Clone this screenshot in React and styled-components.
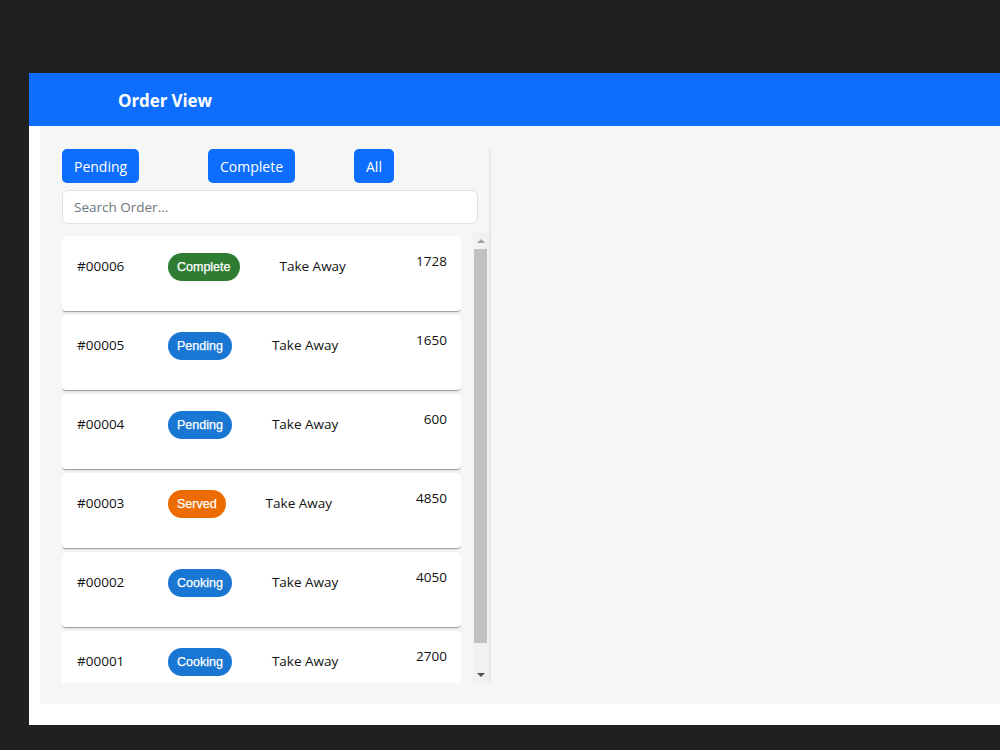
import React from "react";
import styled, { createGlobalStyle } from "styled-components";

const Global = createGlobalStyle`
  html, body { margin: 0; padding: 0; height: 100%; }
  body {
    background: #202020;
    font-family: "Segoe UI", "Open Sans", "Noto Sans", sans-serif;
    overflow: hidden;
  }
  * { box-sizing: border-box; }
`;

const Screen = styled.div`
  padding: 73px 0 0 29px;
  height: 750px;
`;

const Window = styled.div`
  width: 1000px;
  background: #ffffff;
  padding-bottom: 21px;
`;

const Header = styled.header`
  height: 53px;
  background: #0d6efd;
  display: flex;
  align-items: center;
  padding-left: 89px;
`;

const Title = styled.h1`
  margin: 0;
  color: #ffffff;
  font-size: 17px;
  font-weight: 700;
  font-family: "Open Sans", "Noto Sans", sans-serif;
  letter-spacing: -0.1px;
  padding-top: 2px;
`;

const Body = styled.main`
  margin-left: 11px;
  background: #f6f6f6;
  padding: 23px 0 21px 22px;
  display: flex;
`;

const Column = styled.section`
  width: 429px;
  height: 534px;
  border-right: 2px solid #e6e8ec;
  display: flex;
  flex-direction: column;
`;

const FilterRow = styled.div`
  display: grid;
  grid-template-columns: 146px 146px 146px;
  justify-items: start;
`;

const FilterButton = styled.button`
  height: 34px;
  padding: 0 12px;
  border: none;
  border-radius: 5px;
  background: #0d6efd;
  color: #ffffff;
  font-family: "Open Sans", "Noto Sans", sans-serif;
  font-size: 14px;
  cursor: pointer;
`;

const Search = styled.input`
  margin-top: 7px;
  width: 416px;
  height: 34px;
  border: 1px solid #dee2e6;
  border-radius: 6px;
  background: #ffffff;
  padding: 0 11px;
  font-family: "Open Sans", "Noto Sans", sans-serif;
  font-size: 13.5px;
  color: #212529;
  outline: none;
  &::placeholder { color: #6c757d; }
`;

const ListArea = styled.div`
  margin-top: 9px;
  flex: 1;
  min-height: 0;
  display: flex;
  gap: 12px;
`;

const List = styled.div`
  width: 399px;
  overflow: hidden;
  padding: 3px 0;
  display: flex;
  flex-direction: column;
  gap: 4px;
`;

const ScrollTrack = styled.div`
  width: 16px;
  background: #f1f1f1;
  display: flex;
  flex-direction: column;
  align-items: center;
`;

const ScrollArrow = styled.div`
  height: 16px;
  width: 16px;
  display: flex;
  align-items: center;
  justify-content: center;
  margin-top: ${(p) => (p.$end ? "auto" : "0")};
`;

const ScrollThumb = styled.div`
  width: 13px;
  margin-right: 1px;
  height: 394px;
  background: #c1c1c1;
`;

const Card = styled.div`
  flex: 0 0 75px;
  background: #ffffff;
  border-radius: 4px;
  box-shadow: 0 2px 1px -1px rgba(0, 0, 0, 0.2), 0 1px 1px 0 rgba(0, 0, 0, 0.14),
    0 1px 3px 0 rgba(0, 0, 0, 0.12);
  padding: 16px 14px 0 15px;
  display: flex;
  align-items: flex-start;
`;

const OrderId = styled.span`
  width: 91px;
  line-height: 28px;
  font-size: 13.5px;
  color: #111;
`;

const chipColors = {
  Complete: "#2e7d32",
  Pending: "#1976d2",
  Served: "#ed6c02",
  Cooking: "#1976d2",
};

const Chip = styled.span`
  margin-top: 1px;
  height: 28px;
  padding: 0 9px;
  border-radius: 14px;
  background: ${(p) => chipColors[p.$status]};
  color: #ffffff;
  font-family: "Liberation Sans", Arial, sans-serif;
  font-size: 12.5px;
  display: inline-flex;
  align-items: center;
  -webkit-text-stroke: 0.25px #ffffff;
`;

const Kind = styled.span`
  margin-left: 40px;
  line-height: 28px;
  font-size: 13.5px;
  color: #111;
`;

const Price = styled.span`
  margin-left: auto;
  line-height: 18px;
  font-size: 13.5px;
  color: #111;
`;

const orders = [
  { id: "#00006", status: "Complete", total: 1728 },
  { id: "#00005", status: "Pending", total: 1650 },
  { id: "#00004", status: "Pending", total: 600 },
  { id: "#00003", status: "Served", total: 4850 },
  { id: "#00002", status: "Cooking", total: 4050 },
  { id: "#00001", status: "Cooking", total: 2700 },
];

export default function App() {
  return (
    <>
      <Global />
      <Screen>
        <Window>
          <Header>
            <Title>Order View</Title>
          </Header>
          <Body>
            <Column>
              <FilterRow>
                <FilterButton>Pending</FilterButton>
                <FilterButton>Complete</FilterButton>
                <FilterButton>All</FilterButton>
              </FilterRow>
              <Search placeholder="Search Order..." />
              <ListArea>
                <List>
                  {orders.map((o) => (
                    <Card key={o.id}>
                      <OrderId>{o.id}</OrderId>
                      <Chip $status={o.status}>{o.status}</Chip>
                      <Kind>Take Away</Kind>
                      <Price>{o.total}</Price>
                    </Card>
                  ))}
                </List>
                <ScrollTrack>
                  <ScrollArrow>
                    <svg width="8" height="4" viewBox="0 0 8 4">
                      <path d="M0 4L4 0L8 4Z" fill="#a3a3a3" />
                    </svg>
                  </ScrollArrow>
                  <ScrollThumb />
                  <ScrollArrow $end>
                    <svg width="8" height="4" viewBox="0 0 8 4">
                      <path d="M0 0L8 0L4 4Z" fill="#505050" />
                    </svg>
                  </ScrollArrow>
                </ScrollTrack>
              </ListArea>
            </Column>
          </Body>
        </Window>
      </Screen>
    </>
  );
}
